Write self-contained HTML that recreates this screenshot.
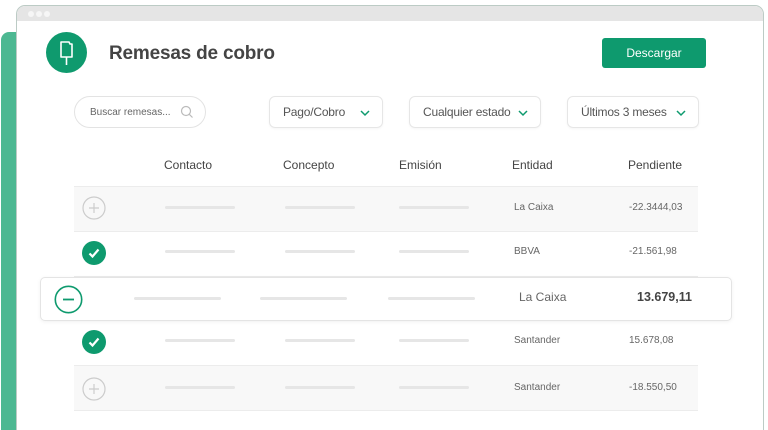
<!DOCTYPE html>
<html style="width:768px;height:430px;overflow:hidden"><head><meta charset="utf-8"><style>
*{margin:0;padding:0;box-sizing:border-box}
body{width:768px;height:430px;overflow:hidden;background:#fff;font-family:"Liberation Sans",sans-serif;position:relative}
.a{position:absolute}
.strip{left:1px;top:32px;width:17px;height:398px;background:#4db892;border-radius:8px 0 0 0}
.win{left:16px;top:5px;width:748px;height:440px;background:#fff;border:1.5px solid #bccbc5;border-radius:9px;overflow:hidden}
.bar{left:0;top:0;width:100%;height:15px;background:#e5e5e5}
.dot{width:6px;height:6px;border-radius:50%;background:#f6f6f6;top:5px}
.sel{height:32px;border:1px solid #e6e6e6;border-radius:6px;font-size:12px;letter-spacing:-0.2px;color:#555;display:flex;align-items:center;padding-left:13px;box-shadow:0 1px 2px rgba(0,0,0,.04)}
.chev{position:absolute;right:11px;top:10px}
.hd{font-size:12px;color:#444;top:158px}
.row{left:74px;width:624px;height:45px;border-bottom:1px solid #ececec}
.g{background:#f8f8f8}
.ln{height:3px;background:#e6e6e6;border-radius:2px}
.t{font-size:10px;color:#666}
</style></head><body>
<div class="a strip"></div>
<div class="a win">
 <div class="a bar"></div>
 <div class="a dot" style="left:11px"></div><div class="a dot" style="left:19px"></div><div class="a dot" style="left:27px"></div>
</div>
<svg class="a" style="left:46px;top:32px" width="41" height="41" viewBox="0 0 41 41"><circle cx="20.5" cy="20.5" r="20.5" fill="#0f9a6e"/><path d="M15 10h8l1 2 2 0v13h-11z" fill="none" stroke="#fff" stroke-width="1.6" stroke-linejoin="round"/><path d="M20.5 25v8" stroke="#fff" stroke-width="1.6"/></svg>
<div class="a" style="left:109px;top:43px;font-size:19px;font-weight:bold;color:#444;letter-spacing:-0.2px">Remesas de cobro</div>
<div class="a" style="left:602px;top:38px;width:104px;height:30px;background:#0e9a6e;border-radius:3px;color:#fff;font-size:12px;display:flex;align-items:center;justify-content:center">Descargar</div>
<div class="a" style="left:74px;top:96px;width:132px;height:32px;border:1px solid #e3e3e3;border-radius:16px;font-size:10px;color:#666;padding:10px 0 0 15px">Buscar remesas...</div>
<svg class="a" style="left:180px;top:105px" width="14" height="14" viewBox="0 0 14 14"><circle cx="6" cy="6" r="4.5" fill="none" stroke="#bbb" stroke-width="1.2"/><path d="M9.3 9.3l3.2 3.2" stroke="#bbb" stroke-width="1.2"/></svg>
<div class="a sel" style="left:269px;top:96px;width:114px">Pago/Cobro<svg class="chev" width="12" height="12"><path d="M2 4l4 4 4-4" fill="none" stroke="#0e9a6e" stroke-width="1.5"/></svg></div>
<div class="a sel" style="left:409px;top:96px;width:132px">Cualquier estado<svg class="chev" width="12" height="12"><path d="M2 4l4 4 4-4" fill="none" stroke="#0e9a6e" stroke-width="1.5"/></svg></div>
<div class="a sel" style="left:567px;top:96px;width:132px">Últimos 3 meses<svg class="chev" width="12" height="12"><path d="M2 4l4 4 4-4" fill="none" stroke="#0e9a6e" stroke-width="1.5"/></svg></div>
<div class="a hd" style="left:164px">Contacto</div>
<div class="a hd" style="left:283px">Concepto</div>
<div class="a hd" style="left:399px">Emisión</div>
<div class="a hd" style="left:512px">Entidad</div>
<div class="a hd" style="left:628px">Pendiente</div>
<div class="a" style="left:74px;top:186px;width:624px;height:1px;background:#ececec"></div>
<div class="a row g" style="top:187px"></div>
<div class="a row" style="top:232px"></div>
<div class="a row" style="top:321px"></div>
<div class="a row g" style="top:366px"></div>
<div class="a" style="left:40px;top:277px;width:692px;height:44px;background:#fff;border:1px solid #e4e4e4;border-radius:5px;box-shadow:0 1px 4px rgba(0,0,0,.06)"></div>
<svg class="a" style="left:82px;top:196px" width="24" height="24"><circle cx="12" cy="12" r="11" fill="none" stroke="#ccc" stroke-width="1.2"/><path d="M12 7v10M7 12h10" stroke="#ccc" stroke-width="1.2"/></svg>
<svg class="a" style="left:82px;top:241px" width="24" height="24"><circle cx="12" cy="12" r="12" fill="#0e9a6e"/><path d="M7.5 12.5l3 3 6-7" fill="none" stroke="#fff" stroke-width="2.2"/></svg>
<svg class="a" style="left:54px;top:285px" width="29" height="29"><circle cx="14.5" cy="14.5" r="13.2" fill="none" stroke="#0e9a6e" stroke-width="1.6"/><path d="M9 14.5h11" stroke="#0e9a6e" stroke-width="1.8"/></svg>
<svg class="a" style="left:82px;top:330px" width="24" height="24"><circle cx="12" cy="12" r="12" fill="#0e9a6e"/><path d="M7.5 12.5l3 3 6-7" fill="none" stroke="#fff" stroke-width="2.2"/></svg>
<svg class="a" style="left:82px;top:377px" width="24" height="24"><circle cx="12" cy="12" r="11" fill="none" stroke="#ccc" stroke-width="1.2"/><path d="M12 7v10M7 12h10" stroke="#ccc" stroke-width="1.2"/></svg>
<div class="a ln" style="left:165px;top:206px;width:70px"></div><div class="a ln" style="left:285px;top:206px;width:70px"></div><div class="a ln" style="left:399px;top:206px;width:70px"></div>
<div class="a ln" style="left:165px;top:250px;width:70px"></div><div class="a ln" style="left:285px;top:250px;width:70px"></div><div class="a ln" style="left:399px;top:250px;width:70px"></div>
<div class="a ln" style="left:134px;top:297px;width:87px"></div><div class="a ln" style="left:260px;top:297px;width:87px"></div><div class="a ln" style="left:388px;top:297px;width:87px"></div>
<div class="a ln" style="left:165px;top:339px;width:70px"></div><div class="a ln" style="left:285px;top:339px;width:70px"></div><div class="a ln" style="left:399px;top:339px;width:70px"></div>
<div class="a ln" style="left:165px;top:386px;width:70px"></div><div class="a ln" style="left:285px;top:386px;width:70px"></div><div class="a ln" style="left:399px;top:386px;width:70px"></div>
<div class="a t" style="left:514px;top:202px">La Caixa</div><div class="a t" style="left:629px;top:202px">-22.3444,03</div>
<div class="a t" style="left:514px;top:246px">BBVA</div><div class="a t" style="left:629px;top:246px">-21.561,98</div>
<div class="a" style="left:519px;top:290px;font-size:12px;color:#666">La Caixa</div><div class="a" style="left:637px;top:290px;font-size:12.5px;color:#444;font-weight:bold">13.679,11</div>
<div class="a t" style="left:514px;top:335px">Santander</div><div class="a t" style="left:629px;top:335px">15.678,08</div>
<div class="a t" style="left:514px;top:382px">Santander</div><div class="a t" style="left:629px;top:382px">-18.550,50</div>
</body></html>
